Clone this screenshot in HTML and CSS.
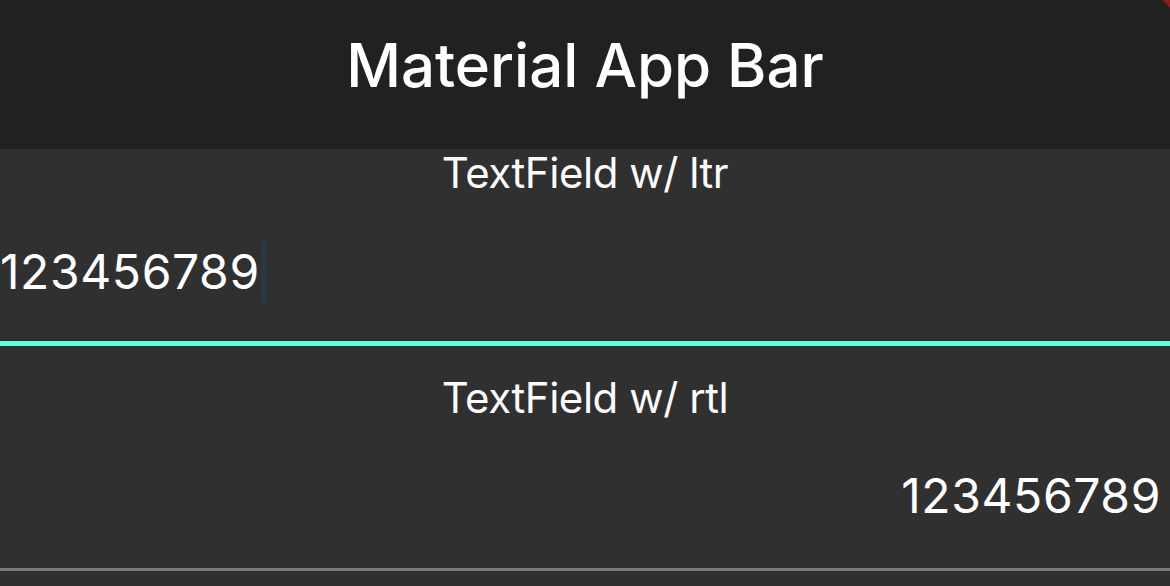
FILE: index.html
```html
<!DOCTYPE html>
<html>
<head>
<meta charset="utf-8">
<link rel="stylesheet" href="styles.css">
</head>
<body>
<div class="app">
  <header class="appbar"><h1 class="title">Material App Bar</h1></header>
  <main class="content">
    <div class="label label-ltr">TextField w/ ltr</div>
    <div class="field field-ltr">
      <span class="value">123456789</span><span class="cursor"></span>
    </div>
    <div class="line line-focused"></div>
    <div class="label label-rtl">TextField w/ rtl</div>
    <div class="field field-rtl">
      <span class="value">123456789</span>
    </div>
    <div class="line line-idle"></div>
  </main>
  <div class="banner"></div>
</div>
</body>
</html>
```
FILE: styles.css
```css
html, body {
  margin: 0;
  padding: 0;
  background: #303030;
  overflow: hidden;
}
.app {
  position: relative;
  width: 1170px;
  height: 586px;
  overflow: hidden;
  font-family: Inter, "Noto Sans", sans-serif;
  color: #ffffff;
  background: #303030;
}
.appbar {
  height: 149px;
  background: #212121;
  display: flex;
  justify-content: center;
  align-items: flex-start;
  box-sizing: border-box;
  padding-top: 35px;
}
.title {
  margin: 0;
  font-size: 60px;
  line-height: 60px;
  font-weight: 500;
  letter-spacing: 0;
}
.content {
  display: flex;
  flex-direction: column;
}
.label {
  text-align: center;
  font-size: 42px;
  line-height: 42px;
  color: #fafafa;
  letter-spacing: -0.45px;
}
.label-ltr { margin-top: 3px; }
.label-rtl { margin-top: 31px; }
.field {
  display: flex;
  align-items: center;
  font-size: 48px;
  line-height: 48px;
  height: 62px;
  letter-spacing: 0.6px;
}
.field-ltr {
  margin-top: 47px;
  justify-content: flex-start;
}
.field-rtl {
  margin-top: 46px;
  justify-content: flex-end;
  padding-right: 9px;
}
.cursor {
  width: 5px;
  height: 62px;
  border-radius: 3px;
  background: #2a3946;
  margin-left: 1px;
}
.line-focused {
  margin-top: 38px;
  height: 5px;
  background: #64ffda;
}
.line-idle {
  margin-top: 41px;
  height: 3px;
  background: #7a7a7a;
}
.banner {
  position: absolute;
  top: -12px;
  right: -22px;
  width: 40px;
  height: 18px;
  background: #8a1c1c;
  transform: rotate(45deg);
}
```
